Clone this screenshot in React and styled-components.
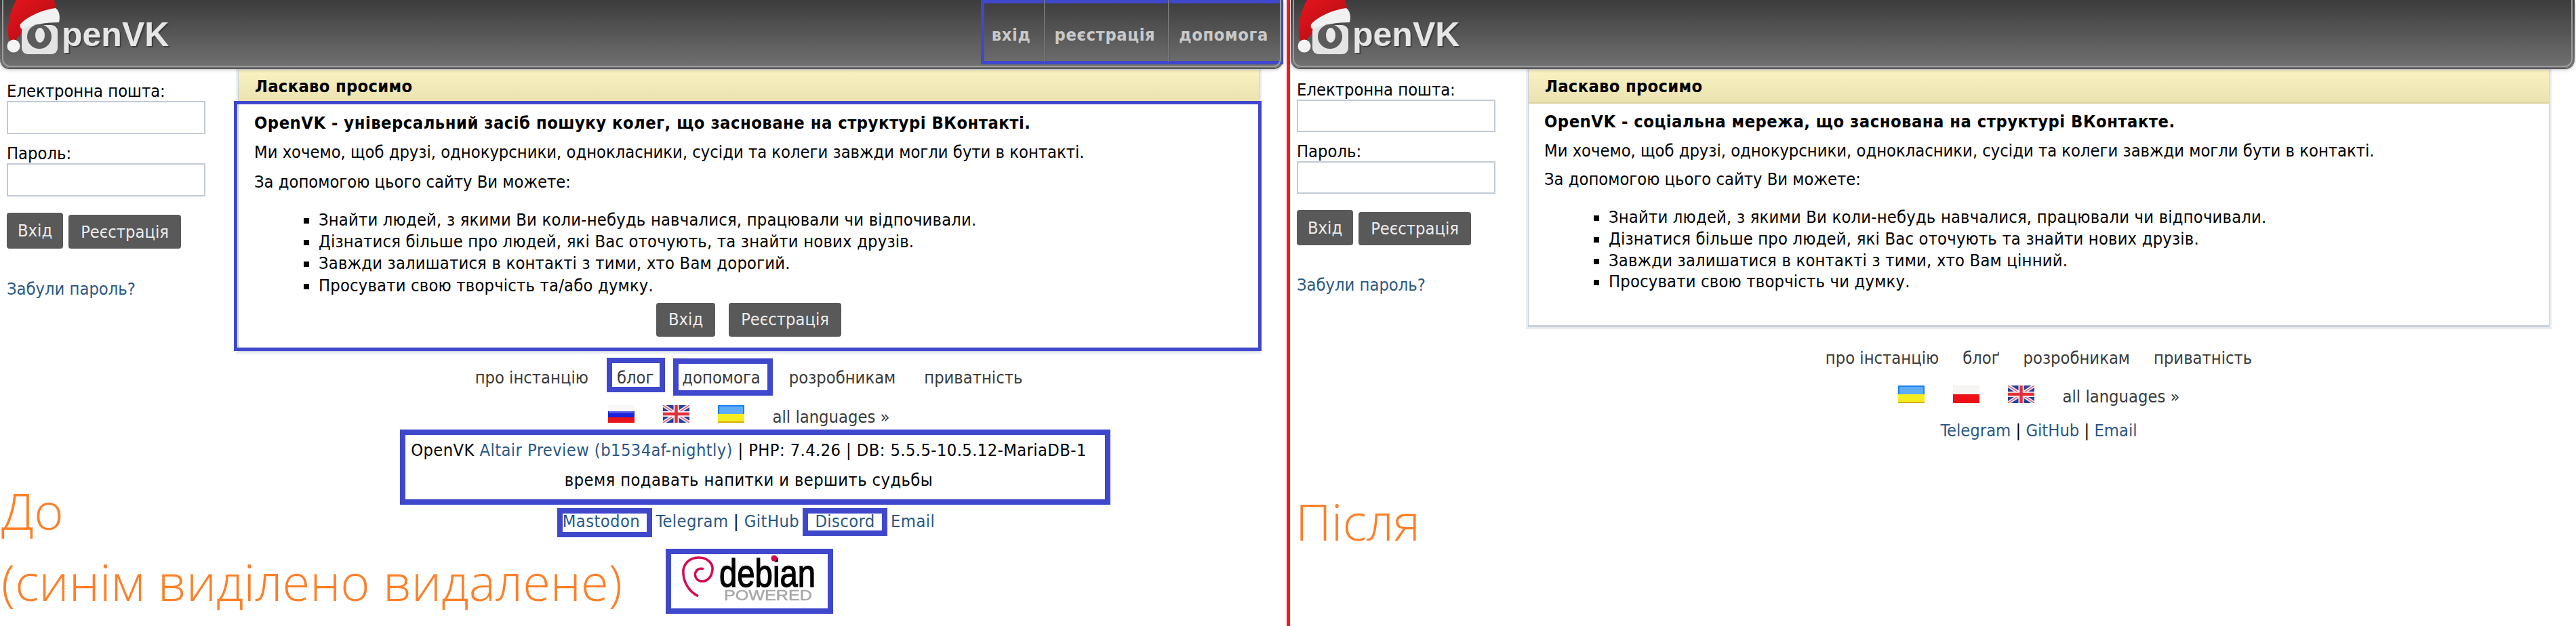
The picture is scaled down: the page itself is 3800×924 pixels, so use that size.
import styled, { createGlobalStyle } from "styled-components";

const BLUE = "#3f48cc";
const LINK = "#2a5885";

const GlobalStyle = createGlobalStyle`
  html, body {
    margin: 0;
    padding: 0;
    background: #fff;
  }
  body {
    font-family: "DejaVu Sans", "Liberation Sans", sans-serif;
    font-stretch: condensed;
    font-size: 25.3px;
    color: #000;
  }
`;

const Page = styled.div`
  display: flex;
  width: 3800px;
  height: 924px;
  overflow: hidden;
`;

const Pane = styled.section`
  position: relative;
  flex: none;
  width: ${({ $before }) => ($before ? "1898px" : "1897px")};
  --body-line: ${({ $before }) => ($before ? "32.3px" : "31.7px")};
  --side-top: ${({ $before }) => ($before ? "22px" : "20px")};
  --input-h: ${({ $before }) => ($before ? "49px" : "48px")};
  --forgot-top: ${({ $before }) => ($before ? "47px" : "46px")};
  --title-h: ${({ $before }) => ($before ? "48px" : "50px")};
  --body-top: ${({ $before }) => ($before ? "15px" : "11px")};
  --body-bottom: ${({ $before }) => ($before ? "19px" : "48px")};
  --nav-top: ${({ $before }) => ($before ? "23px" : "30px")};
  --nav-gap: ${({ $before }) => ($before ? "42px" : "35px")};
`;

const Divider = styled.div`
  flex: none;
  width: 5px;
  background: #ed1c24;
`;

const Header = styled.header`
  position: relative;
  display: flex;
  justify-content: space-between;
  height: 100px;
  width: ${({ $before }) => ($before ? "1893px" : "1894px")};
  margin-left: ${({ $before }) => ($before ? "0" : "1px")};
  background: linear-gradient(#3c3c3c, #717171);
  border-radius: 0 0 14px 14px;
  box-shadow: 0 2px 0 #5a5a5a, 0 3px 5px rgba(0, 0, 0, 0.25);

  &::after {
    content: "";
    position: absolute;
    inset: -4px 3px 1px 3px;
    border: 2px solid #9c9c9c;
    border-radius: 0 0 12px 12px;
    pointer-events: none;
  }
`;

const LogoArt = styled.svg`
  flex: none;
  width: 260px;
  height: 100px;
  filter: blur(0.5px);
`;

const HeaderNav = styled.nav`
  position: relative;
  z-index: 1;
  display: flex;
  height: 91px;
`;

const HeaderLink = styled.a`
  display: flex;
  align-items: center;
  padding: 12px 19px 0 15px;
  font-weight: 700;
  letter-spacing: 0.6px;
  color: #c9c9c9;
  border-right: 1px solid #808080;
  box-shadow: 1px 0 0 #4c4c4c;

  &:last-of-type {
    border-right: none;
    box-shadow: none;
  }
`;

// blue annotation frame drawn over whatever it wraps
const Marked = styled.span`
  position: relative;
  display: inline-block;

  &::after {
    content: "";
    position: absolute;
    inset: ${({ $inset }) => $inset};
    border: ${({ $w }) => $w || 8}px solid ${BLUE};
    pointer-events: none;
  }
`;

const NavFrame = styled(Marked)`
  display: block;
  height: 91px;
  margin-right: 3px;
`;

const Columns = styled.div`
  display: grid;
  grid-template-columns: 351px 1507px;
`;

const Sidebar = styled.form`
  display: flex;
  flex-direction: column;
  align-items: flex-start;
  padding: var(--side-top) 0 0 10px;
`;

const FieldLabel = styled.label`
  line-height: 26px;
  margin-bottom: 1px;
`;

const TextField = styled.input`
  box-sizing: border-box;
  width: 293px;
  height: var(--input-h);
  margin-bottom: 16px;
  border: 2px solid #c1cad6;
  background: #fff;
`;

const Actions = styled.div`
  display: flex;
  align-items: flex-end;
  gap: ${({ $wide }) => ($wide ? "20px" : "8px")};
  margin-top: ${({ $wide }) => ($wide ? "9px" : "8px")};
  justify-content: ${({ $wide }) => ($wide ? "center" : "flex-start")};
`;

const Button = styled.button`
  box-sizing: border-box;
  height: ${({ $tall }) => ($tall ? "calc(var(--input-h) + 4px)" : "calc(var(--input-h) + 1px)")};
  padding: 0 ${({ $tall }) => ($tall ? "16px" : "18px")};
  border: none;
  border-radius: 4px;
  background: #595959;
  color: #ececec;
  font: inherit;
  font-stretch: condensed;
`;

const Forgot = styled.a`
  margin-top: var(--forgot-top);
  line-height: 26px;
  color: ${LINK};
`;

const Main = styled.main`
  display: flex;
  flex-direction: column;
  align-items: stretch;
  padding-top: 3px;
`;

const WelcomeBox = styled.article`
  border: solid #c8d0dc;
  border-width: 0 1px 3px;
  box-shadow: 0 0 0 3px #e9edf2;
`;

const WelcomeTitle = styled.h2`
  box-sizing: border-box;
  height: var(--title-h);
  margin: 0;
  padding: 0 24px;
  font-size: 25.3px;
  font-weight: 700;
  line-height: 50px;
  letter-spacing: 0.3px;
  background: linear-gradient(#faf2c2, #ebe2b0);
  border-bottom: 2px solid #dbd39f;
`;

const WelcomeBody = styled.div`
  position: relative;
  padding: var(--body-top) 23px var(--body-bottom);
  line-height: var(--body-line);
  background: #fff;

  &::after {
    content: ${({ $marked }) => ($marked ? '""' : "none")};
    position: absolute;
    inset: -2px -4px -2px -7px;
    border: 5px solid ${BLUE};
    pointer-events: none;
  }
`;

const Paragraph = styled.p`
  margin: 0 0 11px;
  font-weight: ${({ $bold }) => ($bold ? 700 : 400)};
  letter-spacing: ${({ $bold }) => ($bold ? "0.5px" : "0")};
`;

const Features = styled.ul`
  margin: 24px 0 0;
  padding: 0 0 0 95px;
  list-style: square;
  letter-spacing: 0.2px;
`;

const Footer = styled.footer`
  display: flex;
  flex-direction: column;
  align-items: center;
  margin-top: var(--nav-top);
`;

const FooterNav = styled.nav`
  display: flex;
  gap: var(--nav-gap);
  line-height: 32px;
  color: #3a3a3a;
`;

const Languages = styled.div`
  display: flex;
  align-items: center;
  gap: 42px;
  height: 26px;
  margin-top: 24px;
`;

const Flag = styled.svg`
  display: block;
  width: 39px;
  height: 26px;
`;

const AllLanguages = styled.a`
  position: relative;
  top: 4px;
  color: #3a3a3a;
`;

const Version = styled(Marked)`
  display: block;
  margin-top: 25px;
  line-height: 32px;
  letter-spacing: 0.4px;
  text-align: center;

  div + div {
    margin-top: 12px;
  }
`;

const Socials = styled.div`
  line-height: 32px;
  letter-spacing: ${({ $before }) => ($before ? "0.4px" : "0")};
  margin-top: ${({ $before }) => ($before ? "29px" : "25px")};
`;

const Link = styled.a`
  color: ${LINK};
`;

const DebianFrame = styled(Marked)`
  display: block;
  margin: 32px 0 0 2px;
  width: 231px;
  height: 80px;
`;

const DebianArt = styled.svg`
  display: block;
  width: 231px;
  height: 80px;
  filter: blur(0.7px);
`;

const Caption = styled.div`
  position: absolute;
  left: ${({ $left }) => $left}px;
  top: ${({ $top }) => $top}px;
  font-family: "Open Sans", "Noto Sans", sans-serif;
  font-stretch: normal;
  font-weight: 300;
  font-size: 74px;
  line-height: 105px;
  white-space: pre-line;
  color: #ff7f27;
`;

const Logo = ({ id }) => (
  <LogoArt viewBox="0 0 260 100">
    <defs>
      <linearGradient id={`hat-${id}`} x1="0" y1="0" x2="1" y2="1">
        <stop offset="0" stopColor="#e8141c" />
        <stop offset="1" stopColor="#a80c12" />
      </linearGradient>
    </defs>
    <path d="M14 62C9 44 13 20 24 0H80L85 20L32 48C28 54 24 58 21 62Z" fill={`url(#hat-${id})`} />
    <rect x="32" y="37" width="53" height="43" rx="9" fill="#e4e4e4" />
    <circle cx="58" cy="54" r="18" fill="#5b5b5b" />
    <ellipse cx="59" cy="52" rx="7" ry="11" fill="#e8e8e8" />
    <path d="M30 36C40 24 64 14 82 12C88 16 89 26 87 33C70 33 46 36 33 43C30 42 29 39 30 36Z" fill="#f1f1f1" />
    <circle cx="20" cy="68" r="9.5" fill="#f4f4f4" />
    <text x="93" y="70" fontFamily="Liberation Sans" fontWeight="700" fontSize="50" fill="#2c2c2c" opacity="0.6">
      penVK
    </text>
    <text x="91" y="68" fontFamily="Liberation Sans" fontWeight="700" fontSize="50" fill="#e6e6e6">
      penVK
    </text>
  </LogoArt>
);

const GLOSS = (
  <rect x="1" y="1" width="37" height="11" fill="#fff" opacity="0.25" />
);

const FlagRu = () => (
  <Flag viewBox="0 0 39 26">
    <rect width="39" height="9" fill="#f6f6f6" />
    <rect y="9" width="39" height="9" fill="#1c22d8" />
    <rect y="18" width="39" height="8" fill="#e8121a" />
    {GLOSS}
  </Flag>
);

const FlagUa = () => (
  <Flag viewBox="0 0 39 26">
    <rect width="39" height="13" fill="#1a7ff0" />
    <rect y="13" width="39" height="13" fill="#f4ee20" />
    <rect x="2" y="2" width="35" height="11" fill="#8cc8fa" opacity="0.6" />
    <rect y="24" width="39" height="2" fill="#d8b000" />
  </Flag>
);

const FlagPl = () => (
  <Flag viewBox="0 0 39 26">
    <rect width="39" height="13" fill="#f3efef" />
    <rect y="13" width="39" height="13" fill="#ee1016" />
    {GLOSS}
  </Flag>
);

const FlagUk = () => (
  <Flag viewBox="0 0 39 26">
    <rect width="39" height="26" fill="#2a3f96" />
    <path d="M0 0L39 26M39 0L0 26" stroke="#eef" strokeWidth="5" />
    <path d="M0 0L39 26M39 0L0 26" stroke="#e8606a" strokeWidth="1.5" />
    <path d="M19.5 0V26M0 13H39" stroke="#f4f4f4" strokeWidth="8" />
    <path d="M19.5 0V26M0 13H39" stroke="#e3303c" strokeWidth="4.5" />
  </Flag>
);

const Debian = () => (
  <DebianArt viewBox="0 0 231 80">
    <path
      d="M40 62C24 54 17 38 18 23C20 11 30 5 41 5C54 5 62 14 61 23C60 33 54 40 46 40C38 40 34 33 36 27C38 22 43 20 48 22"
      fill="none"
      stroke="#d70751"
      strokeWidth="3.5"
    />
    <text x="71" y="48" fontFamily="Liberation Sans" fontSize="58" textLength="142" lengthAdjust="spacingAndGlyphs" stroke="#000" strokeWidth="1.4">
      debian
    </text>
    <circle cx="152" cy="6" r="4.5" fill="#d70751" />
    <text x="78" y="68" fontFamily="Liberation Sans" fontSize="22" textLength="130" lengthAdjust="spacingAndGlyphs" fill="#a8a8a8" stroke="#a8a8a8" strokeWidth="0.5">
      POWERED
    </text>
  </DebianArt>
);

const Login = () => (
  <Sidebar>
    <FieldLabel>Електронна пошта:</FieldLabel>
    <TextField type="text" />
    <FieldLabel>Пароль:</FieldLabel>
    <TextField type="password" />
    <Actions>
      <Button type="button" $tall>Вхід</Button>
      <Button type="button">Реєстрація</Button>
    </Actions>
    <Forgot>Забули пароль?</Forgot>
  </Sidebar>
);

const Before = () => (
  <Pane $before>
    <Header $before>
      <Logo id="before" />
      <NavFrame $inset="0 -3px -4px -1px" $w={5}>
        <HeaderNav>
          <HeaderLink>вхід</HeaderLink>
          <HeaderLink>реєстрація</HeaderLink>
          <HeaderLink>допомога</HeaderLink>
        </HeaderNav>
      </NavFrame>
    </Header>
    <Columns>
      <Login />
      <Main>
        <WelcomeBox>
          <WelcomeTitle>Ласкаво просимо</WelcomeTitle>
          <WelcomeBody $marked>
            <Paragraph $bold>OpenVK - універсальний засіб пошуку колег, що засноване на структурі ВКонтакті.</Paragraph>
            <Paragraph>Ми хочемо, щоб друзі, однокурсники, однокласники, сусіди та колеги завжди могли бути в контакті.</Paragraph>
            <Paragraph>За допомогою цього сайту Ви можете:</Paragraph>
            <Features>
              <li>Знайти людей, з якими Ви коли-небудь навчалися, працювали чи відпочивали.</li>
              <li>Дізнатися більше про людей, які Вас оточують, та знайти нових друзів.</li>
              <li>Завжди залишатися в контакті з тими, хто Вам дорогий.</li>
              <li>Просувати свою творчість та/або думку.</li>
            </Features>
            <Actions $wide>
              <Button type="button">Вхід</Button>
              <Button type="button">Реєстрація</Button>
            </Actions>
          </WelcomeBody>
        </WelcomeBox>
        <Footer>
          <FooterNav>
            <a>про інстанцію</a>
            <Marked $inset="-14px -17px -5px -15px">блог</Marked>
            <Marked $inset="-13px -18px -10px -13px">допомога</Marked>
            <a>розробникам</a>
            <a>приватність</a>
          </FooterNav>
          <Languages>
            <FlagRu />
            <FlagUk />
            <FlagUa />
            <AllLanguages>all languages »</AllLanguages>
          </Languages>
          <Version $inset="-15px -35px -20px -16px">
            <div>
              OpenVK <Link>Altair Preview (b1534af-nightly)</Link> | PHP: 7.4.26 | DB: 5.5.5-10.5.12-MariaDB-1
            </div>
            <div>время подавать напитки и вершить судьбы</div>
          </Version>
          <Socials $before>
            <Marked $inset="-4px -2px -7px -8px"><Link>Mastodon</Link> |</Marked>{" "}
            <Link>Telegram</Link> | <Link>GitHub</Link>{" "}
            <Marked $inset="-4px -3px -5px -3px">| <Link>Discord</Link> |</Marked>{" "}
            <Link>Email</Link>
          </Socials>
          <DebianFrame $inset="-8px">
            <Debian />
          </DebianFrame>
        </Footer>
      </Main>
    </Columns>
    <Caption $left={2} $top={701}>{"До\n(синім виділено видалене)"}</Caption>
  </Pane>
);

const After = () => (
  <Pane>
    <Header>
      <Logo id="after" />
    </Header>
    <Columns>
      <Login />
      <Main>
        <WelcomeBox>
          <WelcomeTitle>Ласкаво просимо</WelcomeTitle>
          <WelcomeBody>
            <Paragraph $bold>OpenVK - соціальна мережа, що заснована на структурі ВКонтакте.</Paragraph>
            <Paragraph>Ми хочемо, щоб друзі, однокурсники, однокласники, сусіди та колеги завжди могли бути в контакті.</Paragraph>
            <Paragraph>За допомогою цього сайту Ви можете:</Paragraph>
            <Features>
              <li>Знайти людей, з якими Ви коли-небудь навчалися, працювали чи відпочивали.</li>
              <li>Дізнатися більше про людей, які Вас оточують та знайти нових друзів.</li>
              <li>Завжди залишатися в контакті з тими, хто Вам цінний.</li>
              <li>Просувати свою творчість чи думку.</li>
            </Features>
          </WelcomeBody>
        </WelcomeBox>
        <Footer>
          <FooterNav>
            <a>про інстанцію</a>
            <a>блоґ</a>
            <a>розробникам</a>
            <a>приватність</a>
          </FooterNav>
          <Languages>
            <FlagUa />
            <FlagPl />
            <FlagUk />
            <AllLanguages>all languages »</AllLanguages>
          </Languages>
          <Socials>
            <Link>Telegram</Link> | <Link>GitHub</Link> | <Link>Email</Link>
          </Socials>
        </Footer>
      </Main>
    </Columns>
    <Caption $left={8} $top={717}>Після</Caption>
  </Pane>
);

export default function App() {
  return (
    <>
      <GlobalStyle />
      <Page>
        <Before />
        <Divider />
        <After />
      </Page>
    </>
  );
}
